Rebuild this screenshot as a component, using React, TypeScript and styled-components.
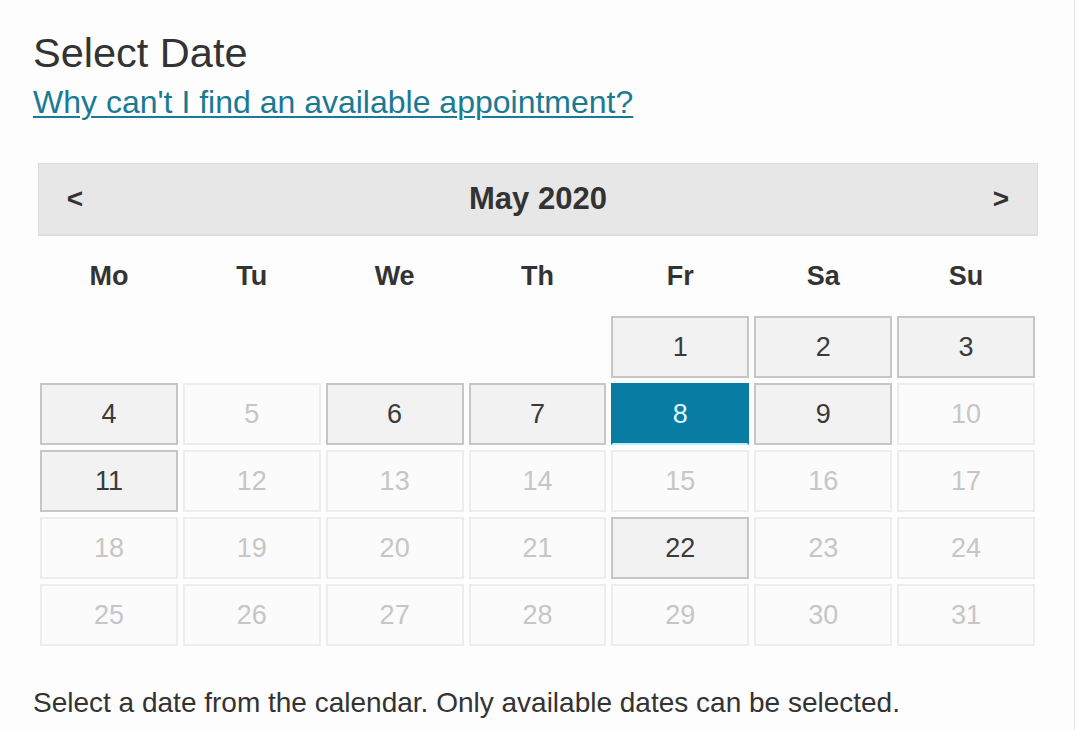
import React, { useState } from 'react';
import styled, { createGlobalStyle, css } from 'styled-components';

const GlobalStyle = createGlobalStyle`
  html, body {
    margin: 0;
    padding: 0;
    background: #ffffff;
  }
  body {
    font-family: 'Liberation Sans', Arial, sans-serif;
    color: #333333;
  }
`;

const Page = styled.div`
  width: 1075px;
  min-height: 730px;
  box-sizing: border-box;
  padding: 29px 0 0 33px;
  background: #fdfdfd;
  border-right: 1px solid #e4e4e4;
`;

const Heading = styled.h2`
  margin: 0;
  font-size: 41.5px;
  line-height: 48px;
  font-weight: 400;
  color: #333333;
`;

const HelpLink = styled.a`
  display: inline-block;
  margin-top: 5px;
  font-size: 32px;
  line-height: 40px;
  color: #1a7a92;
  text-decoration: underline;
  text-decoration-thickness: 2px;
  text-underline-offset: 3px;
  cursor: pointer;
`;

const Calendar = styled.div`
  width: 1000px;
  margin: 41px 0 0 5px;
`;

const MonthBar = styled.div`
  height: 73px;
  box-sizing: border-box;
  display: flex;
  align-items: center;
  justify-content: space-between;
  padding: 0 26px;
  background: #e7e7e8;
  border: 1px solid #dcdcdc;
  border-bottom-width: 2px;
`;

const NavButton = styled.button`
  border: none;
  background: none;
  padding: 0;
  width: 20px;
  font-family: inherit;
  font-size: 28px;
  font-weight: 700;
  color: #333333;
  cursor: pointer;
`;

const MonthTitle = styled.div`
  font-size: 31px;
  font-weight: 700;
  color: #333333;
`;

const WeekHeader = styled.div`
  display: grid;
  grid-template-columns: repeat(7, 1fr);
  column-gap: 5px;
  padding: 0 3px 0 2px;
  height: 80px;
  align-items: center;
`;

const DayName = styled.div`
  text-align: center;
  font-size: 27px;
  font-weight: 700;
  color: #333333;
`;

const DayGrid = styled.div`
  display: grid;
  grid-template-columns: repeat(7, 1fr);
  grid-auto-rows: 62px;
  gap: 5px;
  padding: 0 3px 0 2px;
`;

type CellState = 'empty' | 'open' | 'closed' | 'picked';

const DayCell = styled.div<{ $state: CellState }>`
  box-sizing: border-box;
  display: flex;
  align-items: center;
  justify-content: center;
  font-size: 27px;
  border: 2px solid transparent;

  ${({ $state }) =>
    $state === 'open' &&
    css`
      background: #f2f2f3;
      border-color: #c6c6c6;
      color: #3a3a3a;
      cursor: pointer;
    `}

  ${({ $state }) =>
    $state === 'closed' &&
    css`
      background: #fbfbfb;
      border-color: #ededed;
      color: #c6c6c6;
    `}

  ${({ $state }) =>
    $state === 'picked' &&
    css`
      background: #087ca2;
      border-color: #087ca2;
      border-bottom-color: #bdeefb;
      color: #dff7ff;
      cursor: pointer;
    `}
`;

const Note = styled.p`
  margin: 40px 0 0;
  font-size: 28px;
  line-height: 34px;
  color: #333333;
`;

const dayNames = ['Mo', 'Tu', 'We', 'Th', 'Fr', 'Sa', 'Su'];
const available = [1, 2, 3, 4, 6, 7, 8, 9, 11, 22];
// May 2020 opens on a Friday
const leadingBlanks = 4;
const daysInMonth = 31;

const App = () => {
  const [selected, setSelected] = useState(8);

  const cells: { day: number | null; state: CellState }[] = [];
  for (let i = 0; i < leadingBlanks; i++) cells.push({ day: null, state: 'empty' });
  for (let d = 1; d <= daysInMonth; d++) {
    let state: CellState = available.includes(d) ? 'open' : 'closed';
    if (d === selected) state = 'picked';
    cells.push({ day: d, state });
  }

  return (
    <>
      <GlobalStyle />
      <Page>
        <Heading>Select Date</Heading>
        <HelpLink>Why can't I find an available appointment?</HelpLink>
        <Calendar>
          <MonthBar>
            <NavButton>&lt;</NavButton>
            <MonthTitle>May 2020</MonthTitle>
            <NavButton>&gt;</NavButton>
          </MonthBar>
          <WeekHeader>
            {dayNames.map((n) => (
              <DayName key={n}>{n}</DayName>
            ))}
          </WeekHeader>
          <DayGrid>
            {cells.map((c, i) => (
              <DayCell
                key={i}
                $state={c.state}
                onClick={() => c.day && available.includes(c.day) && setSelected(c.day)}
              >
                {c.day}
              </DayCell>
            ))}
          </DayGrid>
        </Calendar>
        <Note>Select a date from the calendar. Only available dates can be selected.</Note>
      </Page>
    </>
  );
};

export default App;
